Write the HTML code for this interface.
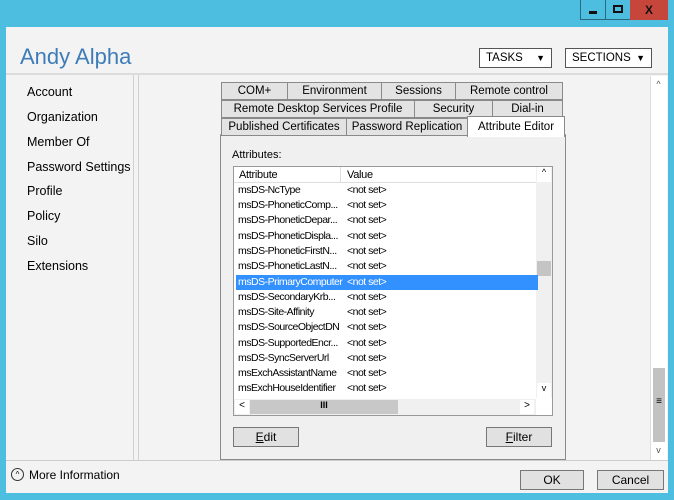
<html><head><style>
body{margin:0;width:674px;height:500px;background:#4dbde0;position:relative;overflow:hidden;font-family:"Liberation Sans",sans-serif;font-size:12px;color:#000}
.a{position:absolute;box-sizing:border-box}
.tab{position:absolute;box-sizing:border-box;border:1px solid #8a8a8a;background:#e3e3e3;text-align:center;font-size:11.5px;line-height:16px;height:18px;white-space:nowrap;overflow:hidden}
.nav{position:absolute;left:27px;font-size:12.5px}
.row{position:absolute;left:238px;width:298px;height:15px;line-height:15px;font-size:10.5px;letter-spacing:-0.5px;white-space:nowrap}
.row span{position:absolute;left:109px}
.btn{position:absolute;box-sizing:border-box;border:1px solid #777;background:#e1e1e1;text-align:center;font-size:12px}
</style></head><body>
<div class="a" style="left:580px;top:0;width:26px;height:20px;background:#4dbde0;border:1px solid #2a6a80;border-top:none"><div class="a" style="left:8px;top:11px;width:8px;height:3px;background:#111"></div></div>
<div class="a" style="left:605px;top:0;width:26px;height:20px;border:1px solid #2a6a80;border-top:none"><div class="a" style="left:7px;top:5px;width:10px;height:8px;border:2px solid #111"></div></div>
<div class="a" style="left:630px;top:0;width:38px;height:20px;background:#c7463c;color:#111;font-weight:bold;text-align:center;line-height:20px;font-size:12px">X</div>
<div class="a" style="left:6px;top:27px;width:662px;height:466px;background:#f3f3f3"></div>
<div class="a" style="left:20px;top:44px;font-size:22px;color:#3d7cb8">Andy Alpha</div>
<div class="a" style="left:479px;top:48px;width:73px;height:20px;border:1px solid #555;background:#fff;font-size:11.5px;line-height:18px;padding-left:6px">TASKS<span style="position:absolute;right:6px;font-size:9px">▼</span></div>
<div class="a" style="left:565px;top:48px;width:87px;height:20px;border:1px solid #555;background:#fff;font-size:11.5px;line-height:18px;padding-left:6px">SECTIONS<span style="position:absolute;right:6px;font-size:9px">▼</span></div>
<div class="a" style="left:6px;top:73px;width:662px;height:2px;background:#dcdcdc"></div>
<div class="a" style="left:133px;top:75px;width:1px;height:385px;background:#d0d0d0"></div>
<div class="a" style="left:138px;top:75px;width:1px;height:385px;background:#d0d0d0"></div>
<div class="nav" style="top:85px">Account</div>
<div class="nav" style="top:110px">Organization</div>
<div class="nav" style="top:135px">Member Of</div>
<div class="nav" style="top:160px">Password Settings</div>
<div class="nav" style="top:184px">Profile</div>
<div class="nav" style="top:209px">Policy</div>
<div class="nav" style="top:234px">Silo</div>
<div class="nav" style="top:259px">Extensions</div>
<div class="a" style="left:650px;top:76px;width:17px;height:384px;background:#fff;border-left:1px solid #ddd"></div>
<div class="a" style="left:651px;top:79px;width:15px;height:16px;text-align:center;font-size:9px;color:#555">^</div>
<div class="a" style="left:653px;top:368px;width:12px;height:74px;background:#c2c2c2"><div style="text-align:center;font-size:10px;margin-top:28px">≡</div></div>
<div class="a" style="left:651px;top:445px;width:15px;height:14px;text-align:center;font-size:9px;color:#555">v</div>
<div class="a" style="left:220px;top:134px;width:346px;height:327px;background:#f0f0f0;border:1px solid #8a8a8a;border-top-color:#bbb;border-bottom:2px solid #8a8a8a"></div>
<div class="tab" style="left:221px;top:82px;width:67px">COM+</div>
<div class="tab" style="left:287px;top:82px;width:95px">Environment</div>
<div class="tab" style="left:381px;top:82px;width:75px">Sessions</div>
<div class="tab" style="left:455px;top:82px;width:108px">Remote control</div>
<div class="tab" style="left:221px;top:100px;width:194px">Remote Desktop Services Profile</div>
<div class="tab" style="left:414px;top:100px;width:79px">Security</div>
<div class="tab" style="left:492px;top:100px;width:71px">Dial-in</div>
<div class="tab" style="left:221px;top:118px;width:126px">Published Certificates</div>
<div class="tab" style="left:346px;top:118px;width:122px">Password Replication</div>
<div class="tab" style="left:467px;top:116px;width:98px;height:21px;background:#fff;border-bottom:none;line-height:20px">Attribute Editor</div>
<div class="a" style="left:232px;top:149px;font-size:11px">Attributes:</div>
<div class="a" style="left:233px;top:166px;width:320px;height:250px;background:#fff;border:1px solid #999"></div>
<div class="a" style="left:234px;top:167px;width:302px;height:16px;border-bottom:1px solid #ddd;font-size:11px;line-height:16px;letter-spacing:-0.3px"><span style="position:absolute;left:5px">Attribute</span><span style="position:absolute;left:106px;top:0;height:16px;border-left:1px solid #ddd;padding-left:6px">Value</span></div>
<div class="a" style="left:536px;top:167px;width:16px;height:231px;background:#f0f0f0"></div>
<div class="a" style="left:537px;top:167px;width:14px;height:15px;background:#fff;text-align:center;font-size:9px">^</div>
<div class="a" style="left:537px;top:261px;width:14px;height:15px;background:#c4c4c4"></div>
<div class="a" style="left:537px;top:383px;width:14px;height:15px;background:#fff;text-align:center;font-size:9px">v</div>
<div class="row" style="top:183px">msDS-NcType<span>&lt;not set&gt;</span></div>
<div class="row" style="top:198px">msDS-PhoneticComp...<span>&lt;not set&gt;</span></div>
<div class="row" style="top:213px">msDS-PhoneticDepar...<span>&lt;not set&gt;</span></div>
<div class="row" style="top:229px">msDS-PhoneticDispla...<span>&lt;not set&gt;</span></div>
<div class="row" style="top:244px">msDS-PhoneticFirstN...<span>&lt;not set&gt;</span></div>
<div class="row" style="top:259px">msDS-PhoneticLastN...<span>&lt;not set&gt;</span></div>
<div class="row" style="top:275px;left:236px;padding-left:2px;width:300px;background:#3390ff;color:#fff">msDS-PrimaryComputer<span style="left:111px">&lt;not set&gt;</span></div>
<div class="row" style="top:290px">msDS-SecondaryKrb...<span>&lt;not set&gt;</span></div>
<div class="row" style="top:305px">msDS-Site-Affinity<span>&lt;not set&gt;</span></div>
<div class="row" style="top:320px">msDS-SourceObjectDN<span>&lt;not set&gt;</span></div>
<div class="row" style="top:336px">msDS-SupportedEncr...<span>&lt;not set&gt;</span></div>
<div class="row" style="top:351px">msDS-SyncServerUrl<span>&lt;not set&gt;</span></div>
<div class="row" style="top:366px">msExchAssistantName<span>&lt;not set&gt;</span></div>
<div class="row" style="top:381px">msExchHouseIdentifier<span>&lt;not set&gt;</span></div>
<div class="a" style="left:234px;top:399px;width:302px;height:16px;background:#f0f0f0"></div>
<div class="a" style="left:235px;top:400px;width:14px;height:14px;background:#fff;font-size:10px;text-align:center">&lt;</div>
<div class="a" style="left:250px;top:400px;width:148px;height:14px;background:#c8c8c8;text-align:center;font-size:9px;font-weight:bold">III</div>
<div class="a" style="left:520px;top:400px;width:14px;height:14px;background:#fff;font-size:10px;text-align:center">&gt;</div>
<div class="btn" style="left:233px;top:427px;width:66px;height:20px;line-height:18px"><u>E</u>dit</div>
<div class="btn" style="left:486px;top:427px;width:66px;height:20px;line-height:18px"><u>F</u>ilter</div>
<div class="a" style="left:6px;top:460px;width:662px;height:1px;background:#ccc"></div>
<div class="a" style="left:11px;top:468px;width:13px;height:13px;border:1px solid #333;border-radius:50%;font-size:8px;text-align:center;line-height:12px">^</div>
<div class="a" style="left:29px;top:468px;font-size:12px">More Information</div>
<div class="btn" style="left:520px;top:470px;width:64px;height:20px;line-height:18px">OK</div>
<div class="btn" style="left:597px;top:470px;width:67px;height:20px;line-height:18px">Cancel</div>
</body></html>
